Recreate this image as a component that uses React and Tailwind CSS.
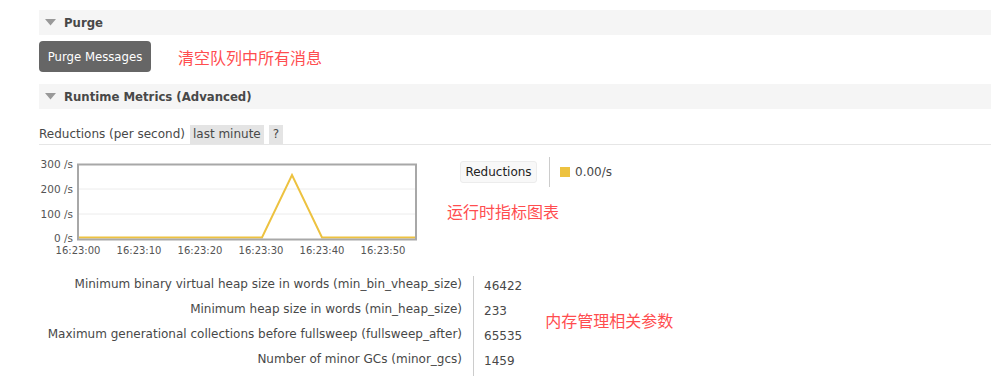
const FONT = { fontFamily: '"DejaVu Sans", sans-serif' };
const COND = { fontFamily: '"DejaVu Sans Condensed", "DejaVu Sans", sans-serif' };
const CJK = { fontFamily: '"Noto Sans CJK SC", sans-serif' };

const ROWS = [
  ["Minimum binary virtual heap size in words (min_bin_vheap_size)", "46422"],
  ["Minimum heap size in words (min_heap_size)", "233"],
  ["Maximum generational collections before fullsweep (fullsweep_after)", "65535"],
  ["Number of minor GCs (minor_gcs)", "1459"],
];

const X_TICKS = ["16:23:00", "16:23:10", "16:23:20", "16:23:30", "16:23:40", "16:23:50"];
const Y_TICKS = [
  ["300 /s", 9],
  ["200 /s", 34],
  ["100 /s", 59],
  ["0 /s", 83],
];

function SectionHeader({ children }) {
  return (
    <div className="flex items-center h-[25px] bg-[#f5f5f5] pl-[6px]">
      <svg width="11" height="7" viewBox="0 0 11 7" className="mr-[8px]">
        <polygon points="0,0 11,0 5.5,6.5" fill="#999999" />
      </svg>
      <span className="text-[13px] font-bold text-[#484848]" style={COND}>
        {children}
      </span>
    </div>
  );
}

function Chart() {
  return (
    <svg width="390" height="102" viewBox="0 0 390 102" className="block" style={FONT}>
      <line x1="39" y1="34" x2="377" y2="34" stroke="#ececec" strokeWidth="1" />
      <line x1="39" y1="59" x2="377" y2="59" stroke="#ececec" strokeWidth="1" />
      <polyline
        points="39,82.5 223,82.5 253,20 283,82.5 376,82.5"
        fill="none"
        stroke="#edc240"
        strokeWidth="2"
      />
      <rect x="39" y="9.5" width="338" height="75" fill="none" stroke="#a8a8a8" strokeWidth="2" />
      {Y_TICKS.map(([t, y]) => (
        <text key={t} x="34" y={y + 4} textAnchor="end" fontSize="10.5" fill="#545454">
          {t}
        </text>
      ))}
      {X_TICKS.map((t, i) => (
        <text key={t} x={39 + i * 61} y="98.5" textAnchor="middle" fontSize="10" fill="#545454">
          {t}
        </text>
      ))}
    </svg>
  );
}

export default function App() {
  return (
    <div className="bg-white w-[991px] h-[385px] overflow-hidden text-[#484848]" style={FONT}>
      <div className="pl-[39px] pt-[10px]">
        <SectionHeader>Purge</SectionHeader>

        <div className="flex items-center mt-[6px]">
          <button
            className="h-[31px] w-[112px] rounded-[4px] bg-[#666666] text-white text-[13px]"
            style={COND}
          >
            Purge Messages
          </button>
          <span className="ml-[27px] text-[16px] text-[#ff4d4f]" style={CJK}>
            清空队列中所有消息
          </span>
        </div>

        <div className="mt-[12px]">
          <SectionHeader>Runtime Metrics (Advanced)</SectionHeader>
        </div>

        <div className="mt-[16px] flex items-end border-b border-[#e6e6e6] h-[20px]">
          <span className="text-[12px] leading-[19px] mr-[5px]">Reductions (per second)</span>
          <span className="text-[12px] leading-[19px] bg-[#e4e4e4] px-[3px] mr-[5px]">last minute</span>
          <span className="text-[12px] leading-[19px] bg-[#e4e4e4] px-[4px]">?</span>
        </div>

        <div className="flex mt-[10px]">
          <Chart />
          <div className="ml-[18px] pt-[2px]">
            <div className="flex items-center h-[30px] ml-[13px]">
              <span className="h-[22px] w-[77px] justify-center flex items-center bg-[#f8f8f8] border border-[#ececec] rounded-[3px] text-[12px] text-[#222]">
                Reductions
              </span>
              <span className="w-px h-[30px] bg-[#cccccc] ml-[12px]" />
              <span className="w-[10px] h-[10px] bg-[#edc240] ml-[10px]" />
              <span className="text-[12px] ml-[5px]">0.00/s</span>
            </div>
            <div className="mt-[12px] text-[16px] text-[#ff4d4f]" style={CJK}>
              运行时指标图表
            </div>
          </div>
        </div>

        <div className="flex mt-[19px]">
          <div className="w-[435px] pr-[11px] text-right border-r border-[#cccccc] whitespace-nowrap">
            {ROWS.map(([label]) => (
              <div key={label} className="h-[25px] text-[12px] leading-[14px] pt-[1px]">
                {label}
              </div>
            ))}
          </div>
          <div className="pl-[10px]">
            {ROWS.map(([label, v]) => (
              <div key={label} className="h-[25px] text-[12px] leading-[14px] pt-[3px]">
                {v}
              </div>
            ))}
          </div>
          <div className="ml-[23px] pt-[32px] text-[16px] text-[#ff4d4f]" style={CJK}>
            内存管理相关参数
          </div>
        </div>
      </div>
    </div>
  );
}
